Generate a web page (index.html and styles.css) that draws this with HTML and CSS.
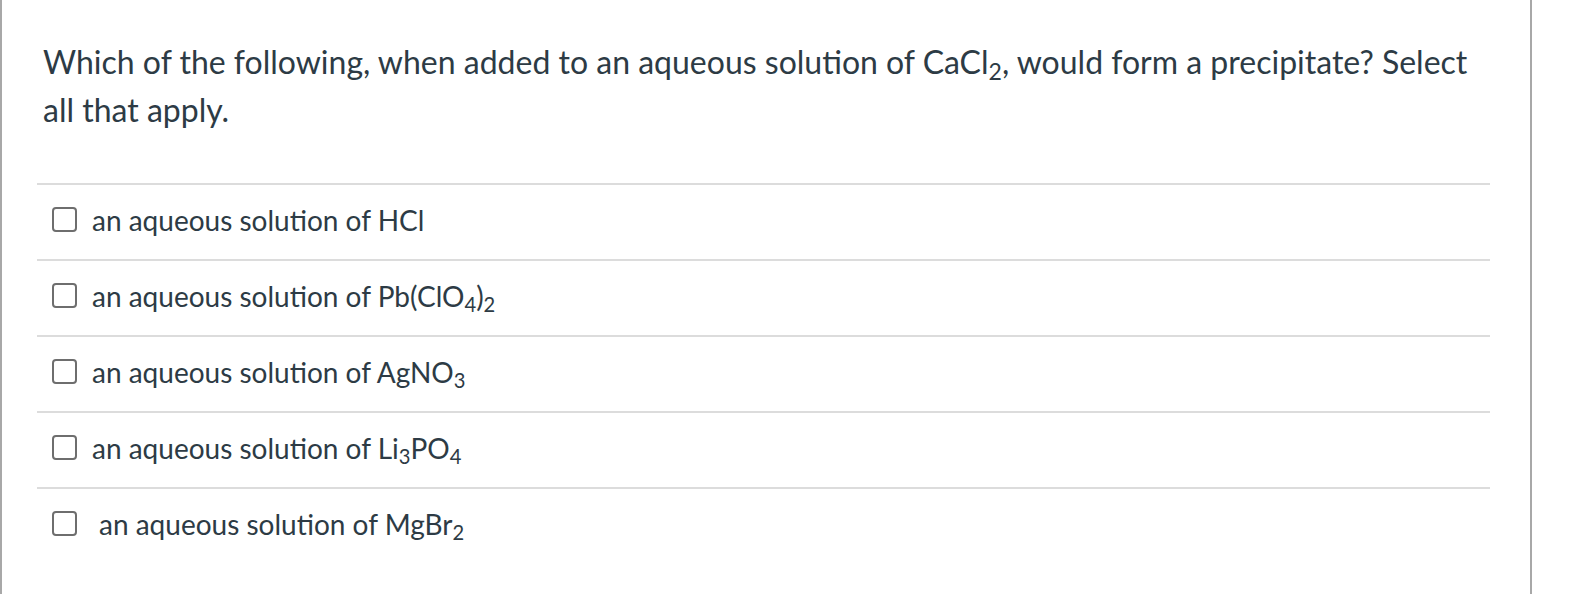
FILE: index.html
```html
<!DOCTYPE html>
<html lang="en">
<head>
<meta charset="utf-8">
<title>Question</title>
<link rel="stylesheet" href="styles.css">
</head>
<body>
<div class="frame">
  <div class="question">Which of the following, when added to an aqueous solution of CaCl<sub>2</sub>, would form a precipitate? Select all that apply.</div>
  <ul class="answers">
    <li class="answer"><span class="box"></span><span class="label">an aqueous solution of HCl</span></li>
    <li class="answer"><span class="box"></span><span class="label">an aqueous solution of Pb(ClO<sub>4</sub>)<sub>2</sub></span></li>
    <li class="answer"><span class="box"></span><span class="label">an aqueous solution of AgNO<sub>3</sub></span></li>
    <li class="answer"><span class="box"></span><span class="label">an aqueous solution of Li<sub>3</sub>PO<sub>4</sub></span></li>
    <li class="answer"><span class="box"></span><span class="label label-shift">an aqueous solution of MgBr<sub>2</sub></span></li>
  </ul>
</div>
</body>
</html>
```
FILE: styles.css
```css
html, body {
  margin: 0;
  padding: 0;
  background: #ffffff;
}
body {
  font-family: Lato, "Open Sans", sans-serif;
  color: #2d3b45;
}
.frame {
  width: 1528px;
  height: 594px;
  border-left: 2px solid #a8a8a8;
  border-right: 2px solid #a8a8a8;
  box-sizing: content-box;
  overflow: hidden;
}
.question {
  margin: 38px 40px 0 41px;
  font-size: 32px;
  line-height: 48px;
}
sub {
  font-size: 72%;
  vertical-align: -0.25em;
  line-height: 0;
}
.answers {
  list-style: none;
  margin: 49px 40px 0 35px;
  padding: 0;
}
.answer {
  display: flex;
  align-items: center;
  height: 74px;
  box-sizing: content-box;
  border-top: 2px solid #dcdcdc;
  font-size: 28px;
}
.answer .box {
  margin-top: -5px;
}
.answer .label {
  margin-top: -5px;
}
.box {
  width: 21px;
  height: 21px;
  border: 2px solid #6e6e6e;
  border-radius: 4px;
  margin-left: 15px;
  margin-right: 15px;
  flex: none;
}
.label-shift {
  margin-left: 7px;
}
```
